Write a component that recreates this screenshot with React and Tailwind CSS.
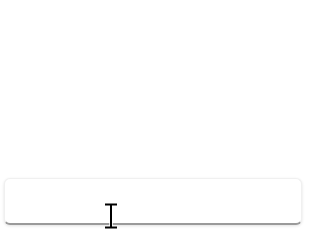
import React from 'react';

function IBeam() {
  return (
    <svg width="14" height="26" viewBox="0 0 14 26" className="absolute left-[104px] top-[203px]">
      <path d="M1 1.5h12M1 24.5h12M7 1.5v23" stroke="#fff" strokeWidth="3.5" fill="none" />
      <path d="M1 1.5h12M1 24.5h12M7 1.5v23" stroke="#000" strokeWidth="2" fill="none" />
    </svg>
  );
}

export default function App() {
  return (
    <div className="relative h-[242px] w-[310px] bg-white pt-[178px] px-[4px]" style={{ fontFamily: '"Liberation Sans", sans-serif' }}>
      <textarea
        className="block h-[47px] w-[298px] resize-none rounded-[6px] border border-[#f0f0f0] border-b-2 border-b-[#9a9a9a] bg-white shadow-[0_1px_3px_rgba(0,0,0,0.12)] outline-none"
      />
      <IBeam />
    </div>
  );
}
